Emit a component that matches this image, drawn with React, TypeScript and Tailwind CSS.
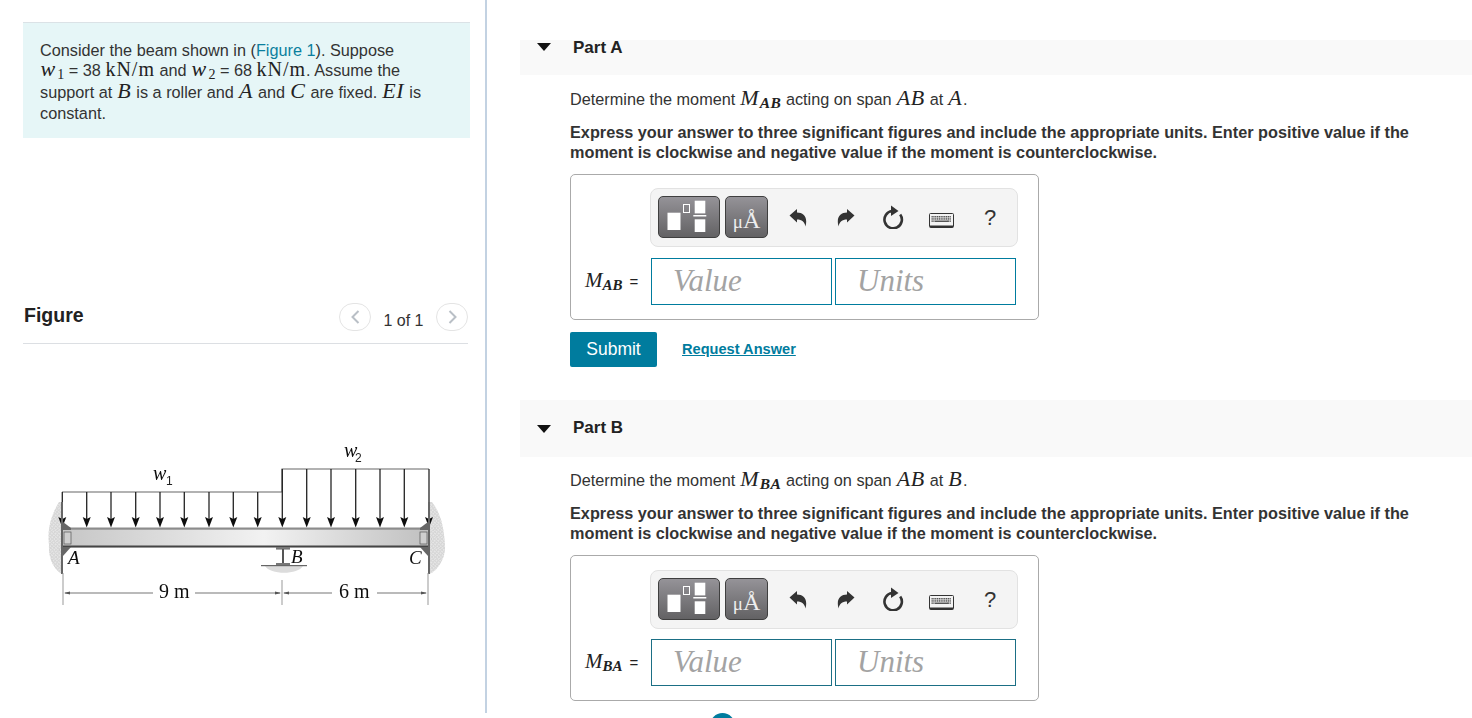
import React from "react";

const Var = ({ children }: { children: React.ReactNode }) => (
  <span className="font-['Liberation_Serif',serif] italic text-[22px] leading-[0] tracking-[0.6px] px-[0.5px] text-[#222]">{children}</span>
);
const Unit = ({ children }: { children: React.ReactNode }) => (
  <span className="font-['Liberation_Serif',serif] text-[20px] leading-[0] text-[#222] tracking-[1px]">{children}</span>
);
const Sub = ({ children }: { children: React.ReactNode }) => (
  <span className="font-['Liberation_Serif',serif] text-[14px] leading-[0] relative top-[3px] text-[#222] ml-[1px]">{children}</span>
);
const ItalSub = ({ children }: { children: React.ReactNode }) => (
  <span className="font-['Liberation_Serif',serif] italic font-semibold text-[15.5px] leading-[0] tracking-[0.5px] relative top-[3px] text-[#222]">{children}</span>
);

const UndoIcon = ({ flip }: { flip?: boolean }) => (
  <svg width="18" height="18" viewBox="0 0 18 18" className={flip ? "-scale-x-100" : ""}>
    <path d="M0.5 6.5 L8 0 V3.6 C14.5 3.6 19 8 16.5 17.5 C15.5 12.5 13 10.4 8 10.4 V13.5 Z" fill="#333" />
  </svg>
);

const ResetIcon = () => (
  <svg width="22" height="24" viewBox="0 0 22 24">
    <path d="M18.2 9.5 A8.7 8.7 0 1 1 10 6" fill="none" stroke="#333" strokeWidth="2.6" />
    <path d="M9 0.5 L16.5 6 L9 11 Z" fill="#333" />
  </svg>
);

const KeyboardIcon = () => {
  const keys: React.ReactNode[] = [];
  for (let r = 0; r < 3; r++) {
    for (let c = 0; c < 11; c++) {
      if (r === 2 && c > 1 && c < 9) continue;
      keys.push(<rect key={`${r}-${c}`} x={2.5 + c * 1.8} y={3 + r * 2.2} width="1.3" height="1.5" fill="#555" />);
    }
  }
  return (
    <svg width="25" height="15" viewBox="0 0 25 15">
      <rect x="0.5" y="0.5" width="24" height="14" rx="1" fill="#f4f4f4" stroke="#333" />
      <rect x="1" y="12.5" width="23" height="2" fill="#333" />
      {keys}
      <rect x="6" y="7.5" width="13" height="1.5" fill="#555" />
    </svg>
  );
};

const Toolbar = () => (
  <div className="ml-[79px] w-[368px] h-[59px] bg-[#f4f4f4] border border-[#e2e2e2] rounded-[8px] flex items-start pt-[7px] pl-[7px]">
    <div className="w-[62px] h-[42px] rounded-[5px] border border-[#3f3f3f] bg-gradient-to-b from-[#959398] to-[#636264] shrink-0">
      <svg width="60" height="40" viewBox="1 1 60 40">
        <rect x="9.5" y="16.7" width="13" height="17.3" fill="#fff" />
        <rect x="25.5" y="8.5" width="6" height="8" fill="none" stroke="#fff" strokeWidth="1" />
        <rect x="36.7" y="4.7" width="10.6" height="12.7" fill="#fff" />
        <rect x="35.3" y="19" width="13" height="1.5" fill="#fff" />
        <rect x="36.7" y="23.3" width="10.6" height="12.7" fill="#fff" />
      </svg>
    </div>
    <div className="ml-[5px] w-[43px] h-[42px] rounded-[5px] border border-[#3f3f3f] bg-gradient-to-b from-[#959398] to-[#636264] shrink-0 flex items-end justify-center pb-[5px] font-['Liberation_Serif',serif] text-[#eee] leading-none">
      <span className="text-[19px] leading-none relative -top-[1px]">μ</span>
      <span className="text-[24px] leading-none">Å</span>
    </div>
    <div className="ml-[21px] mt-[13px] w-[18px] h-[18px]"><UndoIcon /></div>
    <div className="ml-[30px] mt-[13px] w-[18px] h-[18px]"><UndoIcon flip /></div>
    <div className="ml-[27px] mt-[9px] w-[22px] h-[24px]"><ResetIcon /></div>
    <div className="ml-[25px] mt-[17px] w-[25px] h-[15px]"><KeyboardIcon /></div>
    <div className="ml-[30px] mt-[11px] text-[22px] leading-none text-[#333]">?</div>
  </div>
);

const AnswerBox = ({ sub, teal }: { sub: string; teal: boolean }) => (
  <div className={teal ? "w-[469px] h-[146px] border border-[#aaaaaa] rounded-[5px] pt-[13px]" : "w-[469px] h-[146px] border border-[#aaaaaa] rounded-[5px] pt-[14px]"}>
    <Toolbar />
    <div className={teal ? "mt-[11px] flex items-center" : "mt-[10px] flex items-center"}>
      <div className="w-[80px] pl-[14px] -mt-[2px] flex items-baseline text-[#222] whitespace-nowrap">
        <span className="font-['Liberation_Serif',serif] italic text-[21px] leading-none">M</span>
        <span className="font-['Liberation_Serif',serif] italic font-semibold text-[15px] leading-none relative top-[3px]">{sub}</span>
        <span className="ml-[7px] text-[15px] leading-none">=</span>
      </div>
      <div className={teal ? "w-[181px] h-[47px] border border-[#007c9e] flex items-center pl-[21px] pb-[1px] font-['Liberation_Serif',serif] italic text-[31px] text-[#a3a3a3]" : "w-[181px] h-[47px] border border-[#1b6f85] flex items-center pl-[21px] pb-[1px] font-['Liberation_Serif',serif] italic text-[31px] text-[#a3a3a3]"}>Value</div>
      <div className={teal ? "ml-[3px] w-[181px] h-[47px] border border-[#007c9e] flex items-center pl-[21px] pb-[1px] font-['Liberation_Serif',serif] italic text-[31px] text-[#a3a3a3]" : "ml-[3px] w-[181px] h-[47px] border border-[#1b6f85] flex items-center pl-[21px] pb-[1px] font-['Liberation_Serif',serif] italic text-[31px] text-[#a3a3a3]"}>Units</div>
    </div>
  </div>
);

const Caret = () => (
  <svg width="14" height="8" viewBox="0 0 14 8" className="shrink-0"><path d="M0 0 H14 L7 8 Z" fill="#111" /></svg>
);

const Express = () => (
  <p className="font-bold text-[16.25px] leading-[20px] text-[#333] mt-[12px] whitespace-nowrap">
    Express your answer to three significant figures and include the appropriate units. Enter positive value if the
    <br />
    moment is clockwise and negative value if the moment is counterclockwise.
  </p>
);

const Beam = () => {
  const xs = [32.3, 56.7, 81, 105.7, 130, 154.3, 179, 203.3, 227.7, 252.3, 276.7, 301, 325.7, 350, 374.3, 399];
  const dots: React.ReactNode[] = [];
  const rows = [
    [16, 33, 72, 143, "url(#wallL)"],
    [399, 417, 72, 143, "url(#wallR)"],
  ] as const;
  rows.forEach(([x0, x1, y0, y1, clip], k) => {
    const cells: React.ReactNode[] = [];
    for (let y = y0 + 1; y < y1; y += 3.6) {
      for (let x = x0; x < x1; x += 3.6) {
        const j = ((x * 7 + y * 13) % 5) / 4;
        cells.push(<circle key={`${x}-${y}`} cx={x + j} cy={y} r="1.4" fill="none" stroke="#c6c6c6" strokeWidth="0.5" />);
      }
    }
    dots.push(<g key={k} clipPath={clip}>{cells}</g>);
  });
  const blobL = "M29 72 C21 85 17 100 19 115 C18 128 24 140 32 144 L33 72 Z";
  const blobR = "M402 72 C412 85 414 100 415 115 C416 128 408 140 400 144 L399 72 Z";
  return (
    <svg width="430" height="180" viewBox="0 0 430 180" className="block">
      <defs>
        <linearGradient id="beamH" x1="0" x2="1" y1="0" y2="0">
          <stop offset="0" stopColor="#c6c6c6" />
          <stop offset="0.55" stopColor="#f2f2f2" />
          <stop offset="1" stopColor="#c0c0c0" />
        </linearGradient>
        <clipPath id="wallL"><path d={blobL} /></clipPath>
        <clipPath id="wallR"><path d={blobR} /></clipPath>
        <filter id="soft"><feGaussianBlur stdDeviation="0.4" /></filter>
      </defs>
      <g filter="url(#soft)">
        <path d={blobL} fill="#e6e6e6" />
        <path d={blobR} fill="#e6e6e6" />
        <path d="M235 136 H273 C268 145 240 145 235 136 Z" fill="#dcdcdc" />
        {dots}
        <path d="M32 62 H252 V39 H399" fill="none" stroke="#666" strokeWidth="1.1" />
        {xs.map((x) => (
          <g key={x}>
            <line x1={x} x2={x} y1={x > 252 ? 39 : 62} y2={92} stroke="#222" strokeWidth="1.3" />
            <path d={`M${x - 4} 87 L${x} 89 L${x + 4} 87 L${x} 97.5 Z`} fill="#111" />
          </g>
        ))}
        <rect x="32" y="98" width="367" height="19.5" fill="url(#beamH)" />
        <rect x="32" y="97.5" width="367" height="2.2" fill="#8c8c8c" />
        <rect x="32" y="115.5" width="367" height="2" fill="#444" />
        <rect x="31" y="72" width="2" height="72" fill="#666" />
        <rect x="398" y="72" width="2" height="72" fill="#666" />
        <path d="M33 92 L41 98 V100 H33 Z" fill="#666" />
        <path d="M398 92 L390 98 V100 H398 Z" fill="#666" />
        <path d="M33 117 H41 L33 126 Z" fill="#666" />
        <path d="M398 117 H390 L398 126 Z" fill="#666" />
        <rect x="34" y="102" width="7" height="12" fill="#cfcfcf" stroke="#555" strokeWidth="0.7" />
        <rect x="390" y="102" width="7" height="12" fill="#cfcfcf" stroke="#555" strokeWidth="0.7" />
        <rect x="246" y="117" width="14" height="2.6" fill="#777" />
        <rect x="252" y="119" width="2" height="15" fill="#555" />
        <rect x="246" y="133" width="14" height="2" fill="#777" />
        <rect x="231" y="135" width="46" height="1.2" fill="#666" />
        <g stroke="#999" strokeWidth="1">
          <line x1="33" x2="33" y1="143" y2="175" />
          <line x1="252" x2="252" y1="150" y2="175" />
          <line x1="398" x2="398" y1="143" y2="175" />
        </g>
        <g stroke="#666" strokeWidth="0.9">
          <line x1="35" x2="123" y1="163" y2="163" />
          <line x1="165" x2="250" y1="163" y2="163" />
          <line x1="254" x2="302" y1="163" y2="163" />
          <line x1="347" x2="396" y1="163" y2="163" />
        </g>
        <g fill="#555">
          <path d="M34 163 L40 161.5 V164.5 Z" />
          <path d="M251 163 L245 161.5 V164.5 Z" />
          <path d="M253 163 L259 161.5 V164.5 Z" />
          <path d="M397 163 L391 161.5 V164.5 Z" />
        </g>
        <g fontFamily="'Liberation Serif', serif" fill="#111">
          <text x="129" y="168" fontSize="20">9 m</text>
          <text x="309" y="168" fontSize="20">6 m</text>
          <text x="123" y="50" fontSize="20" fontStyle="italic">w</text>
          <text x="314" y="27" fontSize="20" fontStyle="italic">w</text>
          <text x="38" y="134" fontSize="19" fontStyle="italic">A</text>
          <text x="261" y="133" fontSize="19" fontStyle="italic">B</text>
          <text x="379" y="134" fontSize="19" fontStyle="italic">C</text>
        </g>
        <g fontFamily="'Liberation Sans', sans-serif" fill="#222" fontSize="12">
          <text x="136" y="55">1</text>
          <text x="325" y="32">2</text>
        </g>
      </g>
    </svg>
  );
};

export default function App() {
  return (
    <div className="w-[1472px] h-[718px] overflow-hidden bg-white flex font-['Liberation_Sans',Arial,sans-serif] text-[16.25px] text-[#333]">
      <div className="w-[487px] h-[713px] shrink-0 border-r-2 border-[#c3d2e2] pl-[23px] pr-[16px] pt-[22px]">
        <div className="w-[447px] h-[116px] bg-[#e6f6f7] border-t border-[#dbe2e6] pl-[17px] pt-[17px] leading-[21px] whitespace-nowrap">
          Consider the beam shown in (<span className="text-[#0b7f9e]">Figure 1</span>). Suppose
          <br />
          <span className="relative -top-[1px]">
            <Var>w</Var><Sub>1</Sub> = 38 <Unit>kN/m</Unit> and <Var>w</Var><Sub>2</Sub> = 68 <Unit>kN/m</Unit>. Assume the
          </span>
          <br />
          support at <Var>B</Var> is a roller and <Var>A</Var> and <Var>C</Var> are fixed. <Var>EI</Var> is
          <br />
          constant.
        </div>
        <div className="mt-[163px] w-[445px] h-[43px] border-b border-[#dcdfe3] flex justify-between">
          <div className="ml-[1px] font-bold text-[19.5px] leading-[28px] text-[#222]">Figure</div>
          <div className="flex items-start h-[28px] mt-[2px]">
            <div className="w-[32px] h-[28px] rounded-full border border-[#e4e4e4] flex items-center justify-center">
              <svg width="9" height="14" viewBox="0 0 9 14"><path d="M7.5 1 L1.5 7 L7.5 13" fill="none" stroke="#b9bfc6" strokeWidth="2" /></svg>
            </div>
            <div className="w-[65px] pt-[6px] text-center text-[16px]">1 of 1</div>
            <div className="w-[32px] h-[28px] rounded-full border border-[#e4e4e4] flex items-center justify-center">
              <svg width="9" height="14" viewBox="0 0 9 14"><path d="M1.5 1 L7.5 7 L1.5 13" fill="none" stroke="#b9bfc6" strokeWidth="2" /></svg>
            </div>
          </div>
        </div>
        <div className="mt-[86px] ml-[7px]"><Beam /></div>
      </div>

      <div className="flex-1 min-w-0 pl-[33px] pt-[40px]">
        <div className="h-[35px] bg-[#f9f9f9] flex items-start font-bold text-[17px] leading-[16px] text-[#222]">
          <div className="pl-[17px] pt-[3px]"><Caret /></div>
          <div className="ml-[22px]">Part A</div>
        </div>
        <div className="pl-[50px] h-[325px] pt-[13px]">
          <p className="leading-[22px] whitespace-nowrap">
            Determine the moment <Var>M</Var><ItalSub>AB</ItalSub> acting on span <Var>AB</Var> at <Var>A</Var>.
          </p>
          <Express />
          <div className="mt-[12px]"><AnswerBox sub="AB" teal /></div>
          <div className="mt-[12px] flex items-center">
            <div className="w-[87px] h-[35px] bg-[#007c9e] rounded-[2px] text-white text-[17.5px] flex items-center justify-center">Submit</div>
            <div className="ml-[25px] font-bold text-[14.6px] text-[#007c9e] underline">Request Answer</div>
          </div>
        </div>
        <div className="h-[57px] bg-[#f9f9f9] flex items-center font-bold text-[17px] text-[#222]">
          <div className="pl-[17px]"><Caret /></div>
          <div className="ml-[22px] pb-[2px]">Part B</div>
        </div>
        <div className="pl-[50px] pt-[12px]">
          <p className="leading-[22px] whitespace-nowrap">
            Determine the moment <Var>M</Var><ItalSub>BA</ItalSub> acting on span <Var>AB</Var> at <Var>B</Var>.
          </p>
          <Express />
          <div className="mt-[12px]"><AnswerBox sub="BA" teal={false} /></div>
          <div className="mt-[12px] ml-[140px] w-[25px] h-[25px] rounded-full bg-[#007c9e]" />
        </div>
      </div>
    </div>
  );
}
